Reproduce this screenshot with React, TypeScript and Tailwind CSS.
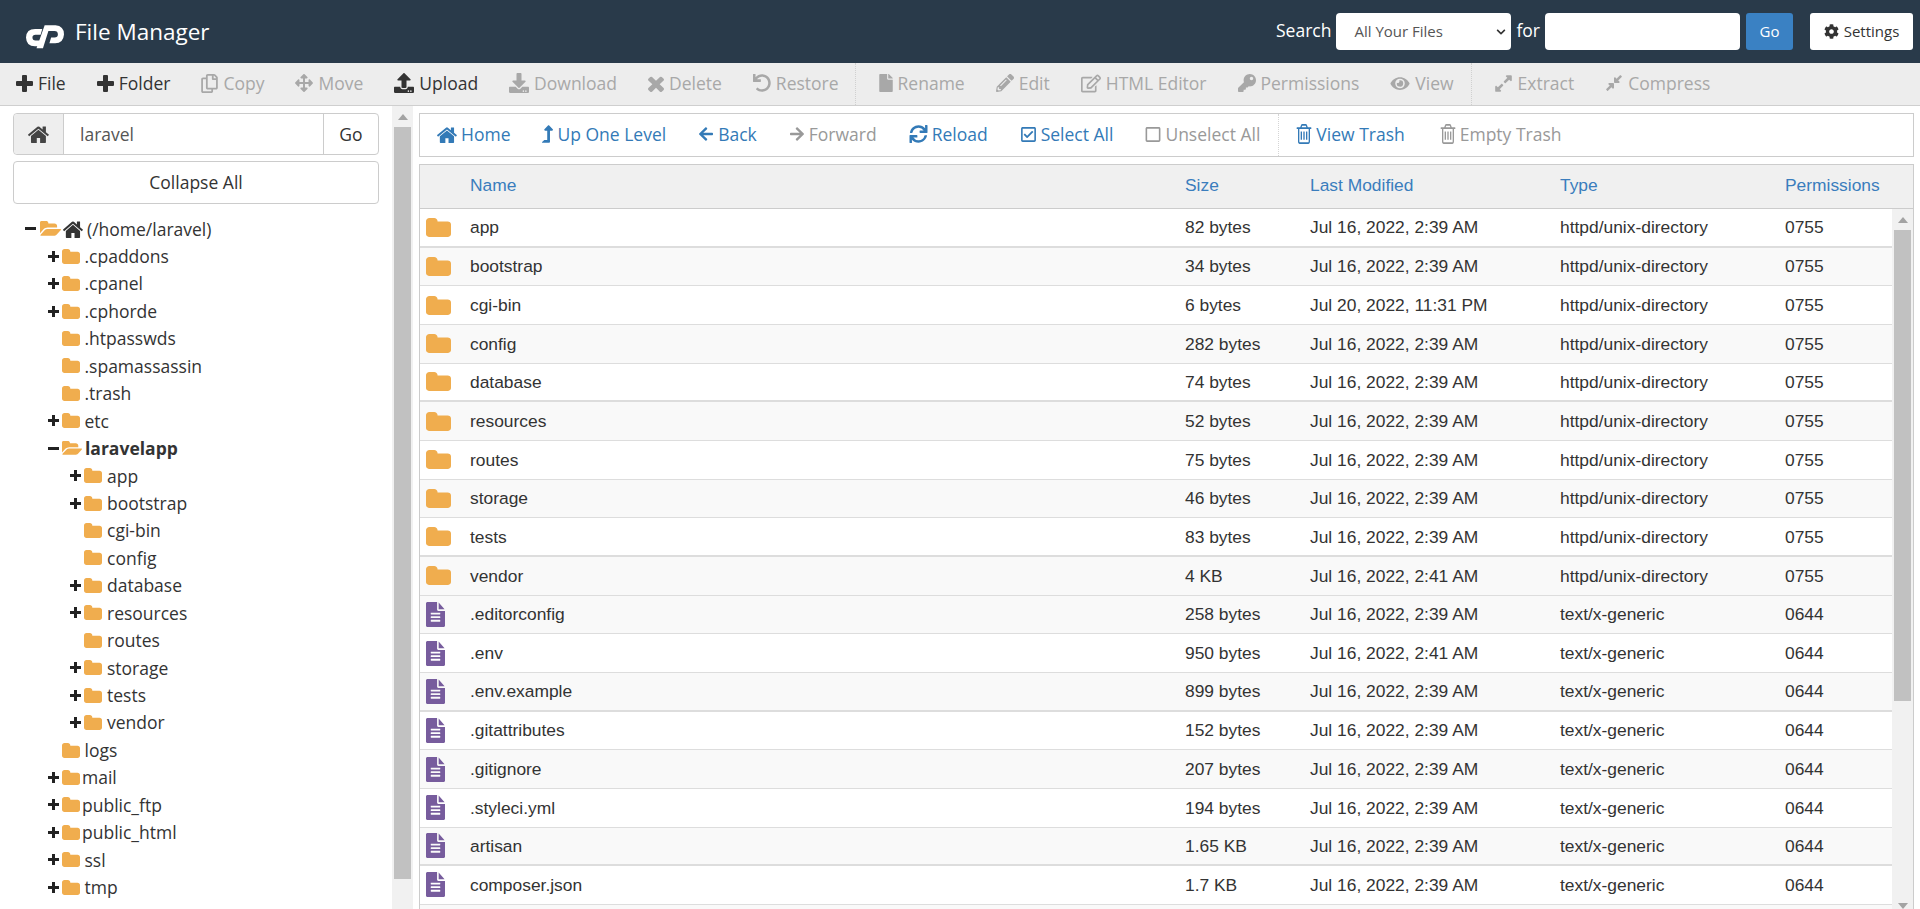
import type { ComponentType, ReactNode } from 'react'
import {
  FaArrowLeft,
  FaArrowRight,
  FaArrowsAlt,
  FaChevronDown,
  FaCog,
  FaCompressAlt,
  FaDownload,
  FaExpandAlt,
  FaEye,
  FaFile,
  FaKey,
  FaLevelUpAlt,
  FaPencilAlt,
  FaRegCheckSquare,
  FaRegCopy,
  FaRegEdit,
  FaRegSquare,
  FaSync,
  FaUndo,
  FaUpload,
} from 'react-icons/fa'

const HOME_PATH =
  'M1472 992v480q0 26-19 45t-45 19h-384v-384h-256v384h-384q-26 0-45-19t-19-45v-480q0-1 .5-3t.5-3l575-474 575 474q1 2 1 6zm223-69l-62 74q-8 9-21 11h-3q-13 0-21-7l-692-577-692 577q-12 8-24 7-13-2-21-11l-62-74q-8-10-7-23.5t11-21.5l719-599q32-26 76-26t76 26l244 204v-195q0-14 9-23t23-9h192q14 0 23 9t9 23v408l219 182q10 8 11 21.5t-7 23.5z'

function HomeIcon({ className }: { className?: string }) {
  return (
    <svg viewBox="90 140 1620 1400" className={className} fill="currentColor" preserveAspectRatio="none">
      <path d={HOME_PATH} />
    </svg>
  )
}

function FolderIcon({ className }: { className?: string }) {
  return (
    <svg viewBox="64 128 1664 1408" className={className} fill="currentColor" preserveAspectRatio="none">
      <path d="M1728 608v704q0 92-66 158t-158 66h-1216q-92 0-158-66t-66-158v-960q0-92 66-158t158-66h320q92 0 158 66t66 158v32h672q92 0 158 66t66 158z" />
    </svg>
  )
}

function OpenFolderIcon({ className }: { className?: string }) {
  return (
    <svg viewBox="0 128 1845 1408" className={className} fill="currentColor" preserveAspectRatio="none">
      <path d="M1845 931q0 35-35 74l-336 396q-43 51-120.5 86.5t-143.5 35.5h-1088q-34 0-60.5-13t-26.5-43q0-35 35-74l336-396q43-51 120.5-86.5t143.5-35.5h1088q34 0 60.5 13t26.5 43zm-343-344v160h-832q-94 0-197 47.5t-164 119.5l-337 396-5 6q0-4-.5-12.5t-.5-12.5v-960q0-92 66-158t158-66h320q92 0 158 66t66 158v32h544q92 0 158 66t66 158z" />
    </svg>
  )
}

function FileTextIcon({ className }: { className?: string }) {
  return (
    <svg viewBox="128 0 1536 1792" className={className} fill="currentColor" preserveAspectRatio="none">
      <path d="M1596 476q14 14 28 36h-472v-472q22 14 36 28zm-476 164h544v1056q0 40-28 68t-68 28h-1344q-40 0-68-28t-28-68v-1600q0-40 28-68t68-28h800v544q0 40 28 68t68 28zm160 736v-64q0-14-9-23t-23-9h-704q-14 0-23 9t-9 23v64q0 14 9 23t23 9h704q14 0 23-9t9-23zm0-256v-64q0-14-9-23t-23-9h-704q-14 0-23 9t-9 23v64q0 14 9 23t23 9h704q14 0 23-9t9-23zm0-256v-64q0-14-9-23t-23-9h-704q-14 0-23 9t-9 23v64q0 14 9 23t23 9h704q14 0 23-9t9-23z" />
    </svg>
  )
}

function TrashIcon({ className }: { className?: string }) {
  return (
    <svg viewBox="128 128 1536 1536" className={className} fill="currentColor" preserveAspectRatio="none">
      <path d="M704 736v576q0 14-9 23t-23 9h-64q-14 0-23-9t-9-23v-576q0-14 9-23t23-9h64q14 0 23 9t9 23zm256 0v576q0 14-9 23t-23 9h-64q-14 0-23-9t-9-23v-576q0-14 9-23t23-9h64q14 0 23 9t9 23zm256 0v576q0 14-9 23t-23 9h-64q-14 0-23-9t-9-23v-576q0-14 9-23t23-9h64q14 0 23 9t9 23zm128 724v-948h-896v948q0 22 7 40.5t14.5 27 10.5 8.5h832q3 0 10.5-8.5t14.5-27 7-40.5zm-672-1076h448l-48-117q-7-9-17-11h-317q-10 2-17 11zm928 32v64q0 14-9 23t-23 9h-96v948q0 83-47 143.5t-113 60.5h-832q-66 0-113-58.5t-47-141.5v-952h-96q-14 0-23-9t-9-23v-64q0-14 9-23t23-9h309l70-167q15-37 54-63t79-26h320q40 0 79 26t54 63l70 167h309q14 0 23 9t9 23z" />
    </svg>
  )
}

function CloseIcon({ className }: { className?: string }) {
  return (
    <svg viewBox="302 240 1188 1314" className={className} fill="currentColor" preserveAspectRatio="none">
      <path d="M1490 1322q0 40-28 68l-136 136q-28 28-68 28t-68-28l-294-294-294 294q-28 28-68 28t-68-28l-136-136q-28-28-28-68t28-68l294-294-294-294q-28-28-28-68t28-68l136-136q28-28 68-28t68 28l294 294 294-294q28-28 68-28t68 28l136 136q28 28 28 68t-28 68l-294 294 294 294q28 28 28 68z" />
    </svg>
  )
}

function CrossIcon({ className }: { className?: string }) {
  return (
    <svg viewBox="0 0 17 17" className={className} fill="currentColor">
      <path d="M6 1q0-1 1-1h3q1 0 1 1v5h5q1 0 1 1v3q0 1-1 1h-5v5q0 1-1 1H7q-1 0-1-1v-5H1q-1 0-1-1V7q0-1 1-1h5z" />
    </svg>
  )
}

function CpanelLogo() {
  return (
    <svg viewBox="18 42 112 72" className="w-[38px] h-[25px] mt-[9px] text-white" fill="currentColor">
      <path d="M66 56H45Q19 56 18 81Q19 107 44 107H54L59 90H46Q37 90 37 81Q37 73 46 73H61Z" />
      <path d="M73 45H105Q130 47 130 72Q128 98 104 98H87L92 81H102Q112 81 112 72Q112 62 102 62H84L68 113H49Z" />
    </svg>
  )
}

type ToolItem = {
  label: string
  Icon: ComponentType<{ className?: string }>
  size: string
  off?: boolean
}

const fileTools: ToolItem[] = [
  { label: 'File', Icon: CrossIcon, size: 'w-[17px] h-[17px]' },
  { label: 'Folder', Icon: CrossIcon, size: 'w-[17px] h-[17px]' },
  { label: 'Copy', Icon: FaRegCopy, size: 'w-[17px] h-[19px]', off: true },
  { label: 'Move', Icon: FaArrowsAlt, size: 'w-[18px] h-[18px]', off: true },
  { label: 'Upload', Icon: FaUpload, size: 'w-[20px] h-[20px]' },
  { label: 'Download', Icon: FaDownload, size: 'w-[20px] h-[20px]', off: true },
  { label: 'Delete', Icon: CloseIcon, size: 'w-[16px] h-[17px]', off: true },
  { label: 'Restore', Icon: FaUndo, size: 'w-[18px] h-[18px]', off: true },
]

const editTools: ToolItem[] = [
  { label: 'Rename', Icon: FaFile, size: 'w-[14px] h-[18px]', off: true },
  { label: 'Edit', Icon: FaPencilAlt, size: 'w-[18px] h-[18px]', off: true },
  { label: 'HTML Editor', Icon: FaRegEdit, size: 'w-[20px] h-[19px]', off: true },
  { label: 'Permissions', Icon: FaKey, size: 'w-[18px] h-[18px]', off: true },
  { label: 'View', Icon: FaEye, size: 'w-[20px] h-[17px]', off: true },
]

const archiveTools: ToolItem[] = [
  { label: 'Extract', Icon: FaExpandAlt, size: 'w-[19px] h-[19px]', off: true },
  { label: 'Compress', Icon: FaCompressAlt, size: 'w-[18px] h-[18px]', off: true },
]

const navLeft: ToolItem[] = [
  { label: 'Home', Icon: HomeIcon, size: 'w-[20px] h-[17px]' },
  { label: 'Up One Level', Icon: FaLevelUpAlt, size: 'w-[11px] h-[20px]' },
  { label: 'Back', Icon: FaArrowLeft, size: 'w-[16px] h-[16px]' },
  { label: 'Forward', Icon: FaArrowRight, size: 'w-[16px] h-[16px]', off: true },
  { label: 'Reload', Icon: FaSync, size: 'w-[19px] h-[18px]' },
  { label: 'Select All', Icon: FaRegCheckSquare, size: 'w-[17px] h-[17px]' },
  { label: 'Unselect All', Icon: FaRegSquare, size: 'w-[16px] h-[17px]', off: true },
]

const navRight: ToolItem[] = [
  { label: 'View Trash', Icon: TrashIcon, size: 'w-[16px] h-[20px]' },
  { label: 'Empty Trash', Icon: TrashIcon, size: 'w-[16px] h-[20px]', off: true },
]

type TreeNode = {
  name: string
  level: 1 | 2
  toggle?: 'plus' | 'minus'
  open?: boolean
  bold?: boolean
  tight?: boolean
}

const tree: TreeNode[] = [
  { name: '.cpaddons', level: 1, toggle: 'plus' },
  { name: '.cpanel', level: 1, toggle: 'plus' },
  { name: '.cphorde', level: 1, toggle: 'plus' },
  { name: '.htpasswds', level: 1 },
  { name: '.spamassassin', level: 1 },
  { name: '.trash', level: 1 },
  { name: 'etc', level: 1, toggle: 'plus' },
  { name: 'laravelapp', level: 1, toggle: 'minus', open: true, bold: true },
  { name: 'app', level: 2, toggle: 'plus' },
  { name: 'bootstrap', level: 2, toggle: 'plus' },
  { name: 'cgi-bin', level: 2 },
  { name: 'config', level: 2 },
  { name: 'database', level: 2, toggle: 'plus' },
  { name: 'resources', level: 2, toggle: 'plus' },
  { name: 'routes', level: 2 },
  { name: 'storage', level: 2, toggle: 'plus' },
  { name: 'tests', level: 2, toggle: 'plus' },
  { name: 'vendor', level: 2, toggle: 'plus' },
  { name: 'logs', level: 1 },
  { name: 'mail', level: 1, toggle: 'plus', tight: true },
  { name: 'public_ftp', level: 1, toggle: 'plus', tight: true },
  { name: 'public_html', level: 1, toggle: 'plus', tight: true },
  { name: 'ssl', level: 1, toggle: 'plus' },
  { name: 'tmp', level: 1, toggle: 'plus' },
]

const folders: [string, string, string][] = [
  ['app', '82 bytes', 'Jul 16, 2022, 2:39 AM'],
  ['bootstrap', '34 bytes', 'Jul 16, 2022, 2:39 AM'],
  ['cgi-bin', '6 bytes', 'Jul 20, 2022, 11:31 PM'],
  ['config', '282 bytes', 'Jul 16, 2022, 2:39 AM'],
  ['database', '74 bytes', 'Jul 16, 2022, 2:39 AM'],
  ['resources', '52 bytes', 'Jul 16, 2022, 2:39 AM'],
  ['routes', '75 bytes', 'Jul 16, 2022, 2:39 AM'],
  ['storage', '46 bytes', 'Jul 16, 2022, 2:39 AM'],
  ['tests', '83 bytes', 'Jul 16, 2022, 2:39 AM'],
  ['vendor', '4 KB', 'Jul 16, 2022, 2:41 AM'],
]

const files: [string, string, string][] = [
  ['.editorconfig', '258 bytes', 'Jul 16, 2022, 2:39 AM'],
  ['.env', '950 bytes', 'Jul 16, 2022, 2:41 AM'],
  ['.env.example', '899 bytes', 'Jul 16, 2022, 2:39 AM'],
  ['.gitattributes', '152 bytes', 'Jul 16, 2022, 2:39 AM'],
  ['.gitignore', '207 bytes', 'Jul 16, 2022, 2:39 AM'],
  ['.styleci.yml', '194 bytes', 'Jul 16, 2022, 2:39 AM'],
  ['artisan', '1.65 KB', 'Jul 16, 2022, 2:39 AM'],
  ['composer.json', '1.7 KB', 'Jul 16, 2022, 2:39 AM'],
]

const rows = [
  ...folders.map(([name, size, date]) => ({ name, size, date, type: 'httpd/unix-directory', perm: '0755', dir: true })),
  ...files.map(([name, size, date]) => ({ name, size, date, type: 'text/x-generic', perm: '0644', dir: false })),
]

const levelPad = { 1: 'pl-[35px]', 2: 'pl-[57px]' }
const cols = 'grid grid-cols-[50px_715px_125px_250px_225px_1fr] items-center'

function ToolButton({ item }: { item: ToolItem }) {
  const { Icon } = item
  return (
    <span className={`flex items-center gap-[5px] ${item.off ? 'text-[#a8a8a8]' : 'text-[#333]'}`}>
      <Icon className={item.size} />
      {item.label}
    </span>
  )
}

function NavLink({ item }: { item: ToolItem }) {
  const { Icon } = item
  return (
    <span className={`flex items-center gap-[4px] ${item.off ? 'text-[#999]' : 'text-[#337ab7]'}`}>
      <Icon className={item.size} />
      {item.label}
    </span>
  )
}

function Arrow({ dir }: { dir: 'up' | 'down' }) {
  return (
    <svg viewBox="0 0 10 6" className="w-[10px] h-[6px] text-[#a3a3a3]" fill="currentColor">
      <path d={dir === 'up' ? 'M5 0l5 6H0z' : 'M5 6L0 0h10z'} />
    </svg>
  )
}

function Toggle({ kind }: { kind?: 'plus' | 'minus' }) {
  if (kind === 'minus') return <span className="w-[11px] h-[3px] mr-[3px] bg-[#222] shrink-0" />
  if (kind === 'plus') {
    return (
      <svg viewBox="0 0 11 11" className="w-[11px] h-[11px] mr-[3px] text-[#222] shrink-0" fill="currentColor">
        <path d="M4 0h3v4h4v3H7v4H4V7H0V4h4z" />
      </svg>
    )
  }
  return <span className="w-[11px] mr-[3px] shrink-0" />
}

function TreeRow({ children, pad }: { children: ReactNode; pad: string }) {
  return <div className={`flex items-center h-[27.45px] whitespace-nowrap ${pad}`}>{children}</div>
}

export default function App() {
  return (
    <div className="h-[909px] overflow-hidden bg-white font-['Open_Sans',sans-serif] text-[17.5px] text-[#333] flex flex-col">
      {/* Top bar */}
      <header className="h-[63px] shrink-0 bg-[#293a4a] flex items-center pl-[26px] pr-[7px] text-white">
        <CpanelLogo />
        <span className="ml-[11px] text-[22.5px]">File Manager</span>
        <div className="ml-auto flex items-center h-[37px]">
          <span className="text-[17.5px] mr-[5px] -mt-[3px]">Search</span>
          <div className="w-[175px] h-[37px] bg-white rounded-[4px] flex items-center justify-between pl-[18px] pr-[5px] text-[#555] text-[15px]">
            All Your Files
            <FaChevronDown className="w-[10px] h-[10px] text-[#333]" />
          </div>
          <span className="text-[17.5px] mx-[5px] -mt-[3px]">for</span>
          <div className="w-[195px] h-[37px] bg-white rounded-[4px]" />
          <span className="ml-[6px] w-[47px] h-[37px] bg-[#3a81c3] rounded-[3px] flex items-center justify-center text-[15px]">Go</span>
          <span className="ml-[17px] w-[103px] h-[37px] bg-white rounded-[3px] flex items-center justify-center gap-[5px] text-[#333] text-[15px]">
            <FaCog className="w-[15px] h-[15px]" />
            Settings
          </span>
        </div>
      </header>

      {/* File actions */}
      <div className="h-[43px] shrink-0 bg-[#ededed] border-b border-[#cfcfcf] flex items-stretch pl-[16px]">
        <div className="flex items-center gap-[31px] pr-[16px] pb-[2px] border-r border-dotted border-[#d0d0d0]">
          {fileTools.map((t) => (
            <ToolButton key={t.label} item={t} />
          ))}
        </div>
        <div className="flex items-center gap-[31px] pl-[23px] pr-[17px] pb-[2px] border-r border-dotted border-[#d0d0d0]">
          {editTools.map((t) => (
            <ToolButton key={t.label} item={t} />
          ))}
        </div>
        <div className="flex items-center gap-[31px] pl-[22px] pb-[2px]">
          {archiveTools.map((t) => (
            <ToolButton key={t.label} item={t} />
          ))}
        </div>
      </div>

      <div className="flex-1 min-h-0 flex">
        {/* Folder tree */}
        <aside className="w-[392px] shrink-0 px-[13px] pt-[7px]">
          <div className="h-[42px] flex border border-[#ccc] rounded-[4px]">
            <span className="w-[50px] bg-[#eee] border-r border-[#ccc] rounded-l-[4px] flex items-center justify-center text-[#444]">
              <HomeIcon className="w-[21px] h-[18px]" />
            </span>
            <span className="flex-1 flex items-center pl-[16px] text-[#555]">laravel</span>
            <span className="w-[55px] border-l border-[#ccc] flex items-center justify-center">Go</span>
          </div>
          <div className="mt-[6px] h-[43px] border border-[#ccc] rounded-[4px] flex items-center justify-center">
            Collapse All
          </div>
          <div className="mt-[11px]">
            <TreeRow pad="pl-[12px]">
              <Toggle kind="minus" />
              <OpenFolderIcon className="w-[21px] h-[15px] ml-[1px] text-[#f0ad4e] shrink-0" />
              <HomeIcon className="w-[20px] h-[18px] ml-[2px] text-[#333] shrink-0" />
              <span className="ml-[4px]">(/home/laravel)</span>
            </TreeRow>
            {tree.map((n) => (
              <TreeRow key={n.name + n.level} pad={levelPad[n.level]}>
                <Toggle kind={n.toggle} />
                {n.open ? (
                  <OpenFolderIcon className="w-[20px] h-[14px] text-[#f0ad4e] shrink-0" />
                ) : (
                  <FolderIcon className="w-[18px] h-[15px] text-[#f0ad4e] shrink-0" />
                )}
                <span className={`${n.tight ? 'ml-[2px]' : n.bold ? 'ml-[3px]' : n.level === 1 ? 'ml-[4.5px]' : 'ml-[5px]'} ${n.bold ? 'font-bold' : ''}`}>
                  {n.name}
                </span>
              </TreeRow>
            ))}
          </div>
        </aside>

        {/* Tree scrollbar */}
        <div className="w-[21px] shrink-0 bg-[#f1f1f1] flex flex-col items-center">
          <div className="h-[21px] shrink-0 flex items-center justify-center">
            <Arrow dir="up" />
          </div>
          <div className="w-[17px] h-[752px] shrink-0 bg-[#c1c1c1]" />
        </div>

        {/* File list */}
        <main className="flex-1 min-w-0 pl-[6px] pr-[6px] pt-[7px] flex flex-col">
          <nav className="h-[44px] shrink-0 border border-[#ccc] flex items-stretch pl-[17px]">
            <div className="flex items-center gap-[32px] pr-[18px] pb-[2px] border-r border-dotted border-[#d5d5d5]">
              {navLeft.map((t) => (
                <NavLink key={t.label} item={t} />
              ))}
            </div>
            <div className="flex items-center gap-[35px] pl-[17px] pb-[2px]">
              {navRight.map((t) => (
                <NavLink key={t.label} item={t} />
              ))}
            </div>
          </nav>

          <section className="mt-[7px] flex-1 min-h-0 border-x border-t border-[#ccc] flex flex-col font-['Liberation_Sans',Arial,sans-serif] text-[17.4px]">
            <div className={`${cols} h-[44px] pb-[2px] shrink-0 bg-[#f0f0f0] border-b border-[#ccc] text-[#3a7dbd]`}>
              <span />
              <span>Name</span>
              <span>Size</span>
              <span>Last Modified</span>
              <span>Type</span>
              <span>Permissions</span>
            </div>
            <div className="flex-1 min-h-0 flex">
              <div className="flex-1 min-w-0 overflow-hidden">
                {rows.map((r, i) => {
                  const shaded = i < 10 ? i % 2 === 1 : i % 2 === 0
                  return (
                    <div
                      key={r.name}
                      className={`${cols} h-[38.67px] border-[#ddd] ${i % 4 === 0 ? 'border-b-2' : 'border-b'} ${shaded ? 'bg-[#f9f9f9]' : 'bg-white'}`}
                    >
                      <span className="pl-[6px]">
                        {r.dir ? (
                          <FolderIcon className="w-[25px] h-[19px] text-[#f0ad4e]" />
                        ) : (
                          <FileTextIcon className="w-[19px] h-[25px] text-[#775c9d]" />
                        )}
                      </span>
                      <span>{r.name}</span>
                      <span>{r.size}</span>
                      <span>{r.date}</span>
                      <span>{r.type}</span>
                      <span>{r.perm}</span>
                    </div>
                  )
                })}
                <div className="h-[4px] bg-[#f9f9f9]" />
              </div>
              <div className="w-[21px] shrink-0 bg-[#f1f1f1] flex flex-col items-center overflow-hidden">
                <div className="h-[21px] shrink-0 flex items-center justify-center">
                  <Arrow dir="up" />
                </div>
                <div className="w-[17px] h-[471px] shrink-0 bg-[#c1c1c1]" />
                <div className="flex-1" />
                <Arrow dir="down" />
              </div>
            </div>
          </section>
        </main>
      </div>
    </div>
  )
}
